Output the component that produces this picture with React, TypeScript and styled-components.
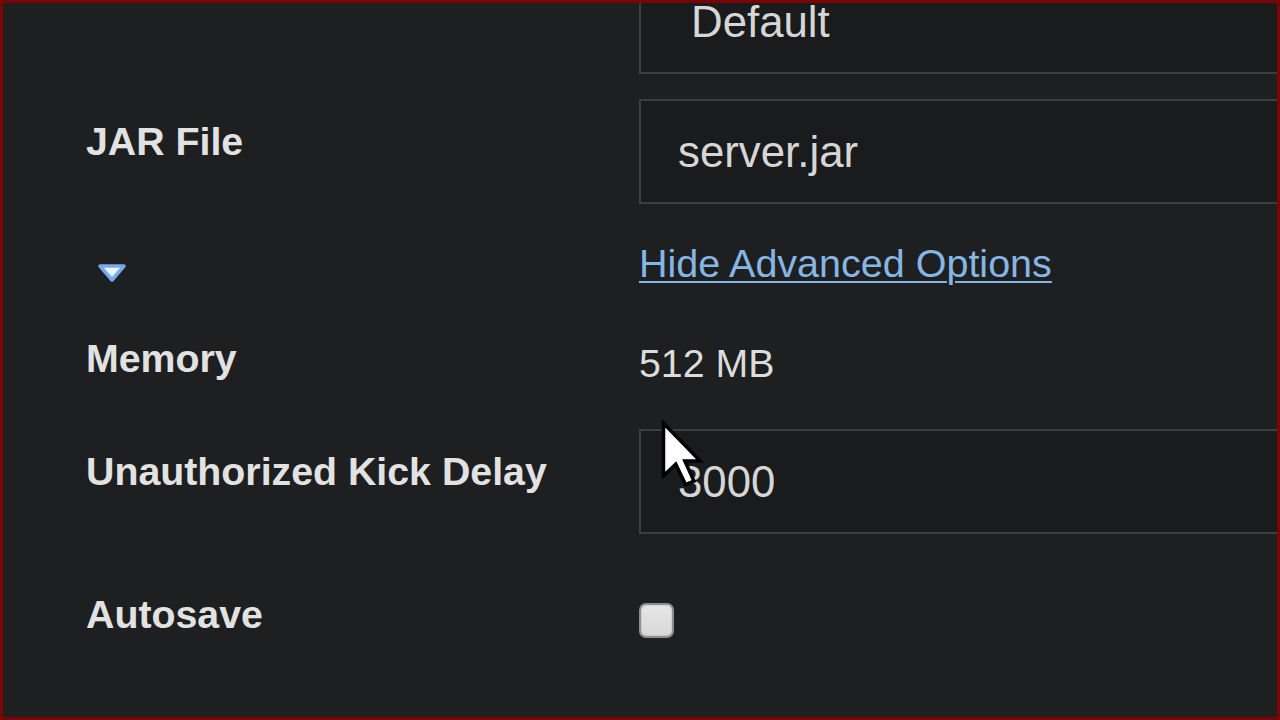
import React from "react";
import styled, { createGlobalStyle } from "styled-components";

const Global = createGlobalStyle`
  html, body { margin: 0; padding: 0; background: #1e1f21; }
  body { font-family: "Liberation Sans", Arial, sans-serif; }
  * { box-sizing: border-box; }
`;

const Frame = styled.div`
  position: relative;
  width: 1280px;
  height: 720px;
  border: 3px solid #7a0303;
  background: #1e1f21;
  overflow: hidden;
`;

const Form = styled.div`
  display: flex;
  flex-direction: column;
  padding-left: 83px;
`;

const Row = styled.div<{ $top: number }>`
  display: grid;
  grid-template-columns: 553px 1fr;
  align-items: start;
  margin-top: ${(p) => p.$top}px;
`;

const Label = styled.div<{ $pad?: number }>`
  font-weight: 700;
  font-size: 39.3px;
  line-height: 45px;
  color: #e2e2e2;
  padding-top: ${(p) => p.$pad ?? 0}px;
`;

const Field = styled.div<{ $pad: number }>`
  width: calc(100% + 12px);
  height: 105px;
  display: flex;
  align-items: center;
  padding-left: ${(p) => p.$pad}px;
  background: #1a1b1d;
  border: 2px solid #3d3e40;
  font-size: 43.8px;
  color: #d6d6d6;
`;

const Value = styled.div<{ $pad?: number }>`
  font-size: 39.3px;
  line-height: 45px;
  color: #dcdcdc;
  padding-top: ${(p) => p.$pad ?? 0}px;
`;

const Link = styled.a`
  font-size: 39.5px;
  line-height: 45px;
  color: #86b6e4;
  text-decoration: underline;
  text-decoration-thickness: 2px;
  text-underline-offset: 4px;
  justify-self: start;
  cursor: pointer;
`;

const Toggle = styled.div`
  margin: 22px 0 0 11px;
  width: 30px;
  height: 20px;
`;

const Check = styled.div`
  margin-top: 11px;
  width: 35px;
  height: 35px;
  border-radius: 7px;
  border: 2px solid #8e8e8e;
  background: linear-gradient(#e6e6e6, #d8d8d8);
  box-shadow: inset 0 0 2px rgba(0, 0, 0, 0.25);
`;

const Cursor = styled.svg`
  position: absolute;
  left: 655px;
  top: 415px;
  width: 46px;
  height: 70px;
`;

export default function App() {
  return (
    <>
      <Global />
      <Frame>
        <Form>
          <Row $top={-34}>
            <div />
            <Field $pad={50}>Default</Field>
          </Row>
          <Row $top={25}>
            <Label $pad={20}>JAR File</Label>
            <Field $pad={37}>server.jar</Field>
          </Row>
          <Row $top={37}>
            <Toggle>
              <svg width="30" height="20" viewBox="0 0 30 20">
                <defs>
                  <linearGradient id="tg" x1="0" y1="0" x2="0" y2="1">
                    <stop offset="0" stopColor="#f4f8ff" />
                    <stop offset="0.6" stopColor="#e2edfd" />
                    <stop offset="1" stopColor="#a9c8f4" />
                  </linearGradient>
                </defs>
                <path
                  d="M3 3 L27 3 L15 17 Z"
                  fill="url(#tg)"
                  stroke="#78a9ec"
                  strokeWidth="3.5"
                  strokeLinejoin="round"
                />
              </svg>
            </Toggle>
            <Link>Hide Advanced Options</Link>
          </Row>
          <Row $top={50}>
            <Label>Memory</Label>
            <Value $pad={5}>512 MB</Value>
          </Row>
          <Row $top={43}>
            <Label $pad={20}>Unauthorized Kick Delay</Label>
            <Field $pad={37}>3000</Field>
          </Row>
          <Row $top={58}>
            <Label>Autosave</Label>
            <Check />
          </Row>
        </Form>
        <Cursor viewBox="0 0 13 20">
          <path
            d="M1.5 1.5 L1.5 16.5 L5 13.2 L7.8 19 L10.2 18 L7.6 12.3 L12 12.3 Z"
            fill="#ffffff"
            stroke="#000000"
            strokeWidth="1"
            strokeLinejoin="miter"
          />
        </Cursor>
      </Frame>
    </>
  );
}
